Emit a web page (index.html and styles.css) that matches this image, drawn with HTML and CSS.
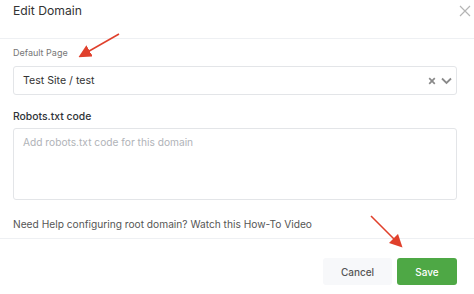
FILE: index.html
```html
<!DOCTYPE html>
<html>
<head>
<meta charset="utf-8">
<link rel="stylesheet" href="styles.css">
</head>
<body>
<div class="modal">
  <div class="header">
    <span class="title">Edit Domain</span>
    <svg class="close" width="12" height="12" viewBox="0 0 12 12"><path d="M1 1L11 11M11 1L1 11" stroke="#b5b5b5" stroke-width="1.2" fill="none"/></svg>
  </div>
  <div class="body">
    <div class="label-sm">Default Page</div>
    <div class="select">
      <span class="value">Test Site / test</span>
      <span class="icons">
        <svg width="8" height="8" viewBox="0 0 8 8"><path d="M1.2 1.2L6.8 6.8M6.8 1.2L1.2 6.8" stroke="#8a8a8a" stroke-width="1.7" fill="none"/></svg>
        <svg width="11" height="8" viewBox="0 0 11 8"><path d="M1 1.5L5.5 6L10 1.5" stroke="#8a8a8a" stroke-width="1.8" fill="none"/></svg>
      </span>
    </div>
    <div class="label">Robots.txt code</div>
    <div class="textarea"><span class="placeholder">Add robots.txt code for this domain</span></div>
    <div class="help">Need Help configuring root domain? Watch this How-To Video</div>
  </div>
  <div class="footer">
    <button class="btn cancel">Cancel</button>
    <button class="btn save">Save</button>
  </div>
  <svg class="arrow" width="474" height="294" viewBox="0 0 474 294">
    <defs><marker id="h" markerWidth="8" markerHeight="8" refX="4" refY="4" orient="auto"><path d="M0 0L8 4L0 8Z" fill="#e0402c"/></marker></defs>
    <path d="M119 34L84 54" stroke="#e0402c" stroke-width="1.6" marker-end="url(#h)"/>
    <path d="M371 216L398 243" stroke="#e0402c" stroke-width="1.6" marker-end="url(#h)"/>
  </svg>
</div>
</body>
</html>
```
FILE: styles.css
```css
* { box-sizing: border-box; }
html, body { margin: 0; padding: 0; background: #fff; }
body { width: 474px; height: 294px; overflow: hidden; font-family: Inter, "Open Sans", sans-serif; color: #333; }
.modal { position: relative; width: 474px; height: 294px; }
.header { height: 39px; border-bottom: 1px solid #eef0f3; display: flex; justify-content: space-between; align-items: flex-start; padding: 3px 3px 0 13px; }
.title { font-size: 12.2px; line-height: 16px; color: #333; }
.close { margin-top: 2px; }
.body { padding: 7px 17px 0 13px; height: 200px; border-bottom: 1px solid #eef0f3; }
.label-sm { font-size: 9px; color: #777; line-height: 14px; }
.select { margin-top: 6px; height: 29px; border: 1px solid #e3e5e8; border-radius: 3px; display: flex; align-items: center; justify-content: space-between; padding: 0 4px 0 9px; }
.value { font-size: 10.6px; color: #333; }
.icons { display: flex; gap: 5px; align-items: center; }
.label { margin-top: 14px; font-size: 10.4px; font-weight: 500; color: #2f3338; line-height: 16px; }
.textarea { margin-top: 3px; height: 72px; border: 1px solid #e3e5e8; border-radius: 3px; padding: 7px 9px; font-size: 10.2px; line-height: 12px; }
.placeholder { color: #b0b3b8; }
.help { margin-top: 17px; font-size: 10.2px; color: #555; line-height: 14px; }
.footer { display: flex; justify-content: flex-end; gap: 5px; padding: 19px 17px 0 0; }
.btn { height: 27px; border: none; border-radius: 3px; font-family: inherit; font-size: 10px; font-weight: 500; }
.cancel { width: 69px; background: #f7f8fa; color: #555; }
.save { width: 60px; background: #4ea845; color: #fff; }
.arrow { position: absolute; left: 0; top: 0; pointer-events: none; }
```
